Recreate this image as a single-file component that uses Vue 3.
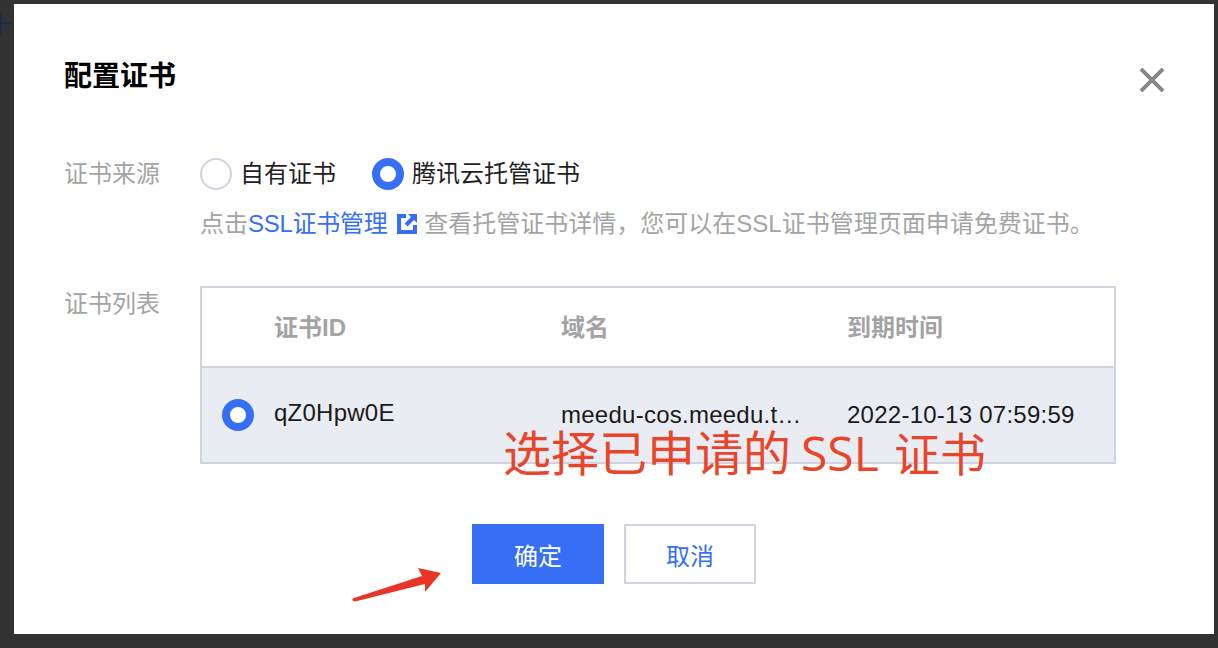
<script setup>
const row = { id: 'qZ0Hpw0E', domain: 'meedu-cos.meedu.t…', expire: '2022-10-13 07:59:59' }
</script>

<template>
  <div class="page">
    <span class="bg-glyph">十个</span>
    <section class="modal">
      <header class="head">
        <h1 class="title">配置证书</h1>
        <svg class="close" viewBox="0 0 24 24" width="24" height="24" aria-label="关闭">
          <path d="M1 1 L23 23 M23 1 L1 23" stroke="#888888" stroke-width="4" fill="none" />
        </svg>
      </header>

      <div class="field source">
        <div class="label">证书来源</div>
        <div class="control">
          <div class="radios">
            <label class="radio"><i class="dot"></i>自有证书</label>
            <label class="radio"><i class="dot on"></i>腾讯云托管证书</label>
          </div>
          <p class="hint">
            点击<a class="link">SSL证书管理</a>
            <svg class="ext" viewBox="0 0 20 20" width="20" height="20">
              <path fill="#366ff6" d="M0 0H9V4H4V16H16V11H20V20H0Z" />
              <path fill="#366ff6" d="M11 0H20V9L17 6L10.5 12.5L7.5 9.5L14 3Z" />
            </svg>
            查看托管证书详情，您可以在SSL证书管理页面申请免费证书。
          </p>
        </div>
      </div>

      <div class="field list">
        <div class="label">证书列表</div>
        <div class="table">
          <div class="tr th">
            <span></span>
            <span>证书ID</span>
            <span>域名</span>
            <span>到期时间</span>
          </div>
          <div class="tr td">
            <span class="cell-radio"><i class="dot on"></i></span>
            <span class="cell-id">{{ row.id }}</span>
            <span>{{ row.domain }}</span>
            <span>{{ row.expire }}</span>
          </div>
        </div>
      </div>

      <footer class="actions">
        <button class="btn primary">确定</button>
        <button class="btn ghost">取消</button>
      </footer>

      <div class="note">选择已申请的<span class="ssl">SSL</span> <span class="tail">证书</span></div>
      <svg class="arrow" viewBox="0 0 92 36" width="92" height="36">
        <path fill="#e83525" d="M0.5 31.5 L70 9 L66 1 L89 6 L73 25 L73 17 L3 34.5 Q0 34.5 0.5 31.5Z" />
      </svg>
    </section>
  </div>
</template>

<style scoped>
.page {
  position: relative;
  width: 1218px;
  height: 648px;
  box-sizing: border-box;
  padding: 4px 4px 14px 14px;
  overflow: hidden;
  background: #323233;
  font-family: "Liberation Sans", "Noto Sans CJK SC", sans-serif;
}
.bg-glyph {
  position: absolute;
  left: -13px;
  top: 4px;
  font-size: 26px;
  color: #1c2a52;
}
.modal {
  position: relative;
  height: 630px;
  box-sizing: border-box;
  padding: 50px 50px 0;
  background: #fff;
}
.head {
  display: flex;
  justify-content: space-between;
  align-items: flex-start;
}
.title {
  margin: 1px 0 -1px;
  font-size: 28px;
  line-height: 44px;
  font-weight: 700;
  color: #000;
}
.close {
  margin: 14px 0 0;
}
.field {
  display: flex;
}
.label {
  width: 136px;
  flex: none;
  font-size: 24px;
  line-height: 36px;
  color: #a4a4a4;
  box-sizing: border-box;
}
.source {
  margin-top: 58px;
}
.radios {
  display: flex;
  gap: 36px;
  height: 36px;
}
.radio {
  display: flex;
  align-items: center;
  gap: 8px;
  font-size: 24px;
  line-height: 36px;
  color: #1f1f1f;
}
.dot {
  display: block;
  width: 32px;
  height: 32px;
  box-sizing: border-box;
  border: 2px solid #d0d4e0;
  border-radius: 50%;
  background: #fff;
}
.dot.on {
  border: 8px solid #366ff6;
}
.hint {
  margin: 14px 0 0;
  font-size: 24px;
  line-height: 36px;
  color: #a4a4a4;
  white-space: nowrap;
}
.link {
  color: #366ff6;
  letter-spacing: -0.25px;
}
.ext {
  vertical-align: -2px;
  margin: 0 1px 0 9px;
}
.list {
  margin-top: 44px;
}
.table {
  width: 916px;
  box-sizing: border-box;
  border: 2px solid #d0d4e0;
}
.tr {
  display: grid;
  grid-template-columns: 72px 287px 286px 1fr;
  align-items: center;
  font-size: 24px;
  letter-spacing: 0.25px;
}
.th {
  height: 74px;
  padding-bottom: 4px;
  font-weight: 700;
  letter-spacing: 0;
  color: #a3a3a3;
  border-bottom: 2px solid #d0d4e0;
  box-sizing: content-box;
}
.td {
  height: 94px;
  background: #e9ecf2;
  color: #1a1a1a;
}
.cell-radio {
  padding-left: 20px;
}
.cell-id {
  margin-bottom: 4px;
}
.actions {
  display: flex;
  justify-content: center;
  gap: 20px;
  margin-top: 60px;
}
.btn {
  width: 132px;
  height: 60px;
  box-sizing: border-box;
  font: inherit;
  font-size: 24px;
  padding: 0;
}
.primary {
  border: 0;
  background: #366ff6;
  color: #fff;
}
.ghost {
  border: 2px solid #d0d4e0;
  background: #fff;
  color: #366ff6;
}
.note {
  position: absolute;
  left: 489px;
  top: 419px;
  font-size: 48px;
  line-height: 60px;
  color: #e9452a;
  white-space: nowrap;
}
.ssl {
  font-family: "Open Sans", sans-serif;
  margin-left: 10px;
  margin-right: 2px;
}
.tail {
  font-size: 46px;
}
.arrow {
  position: absolute;
  left: 338px;
  top: 563px;
}
</style>
